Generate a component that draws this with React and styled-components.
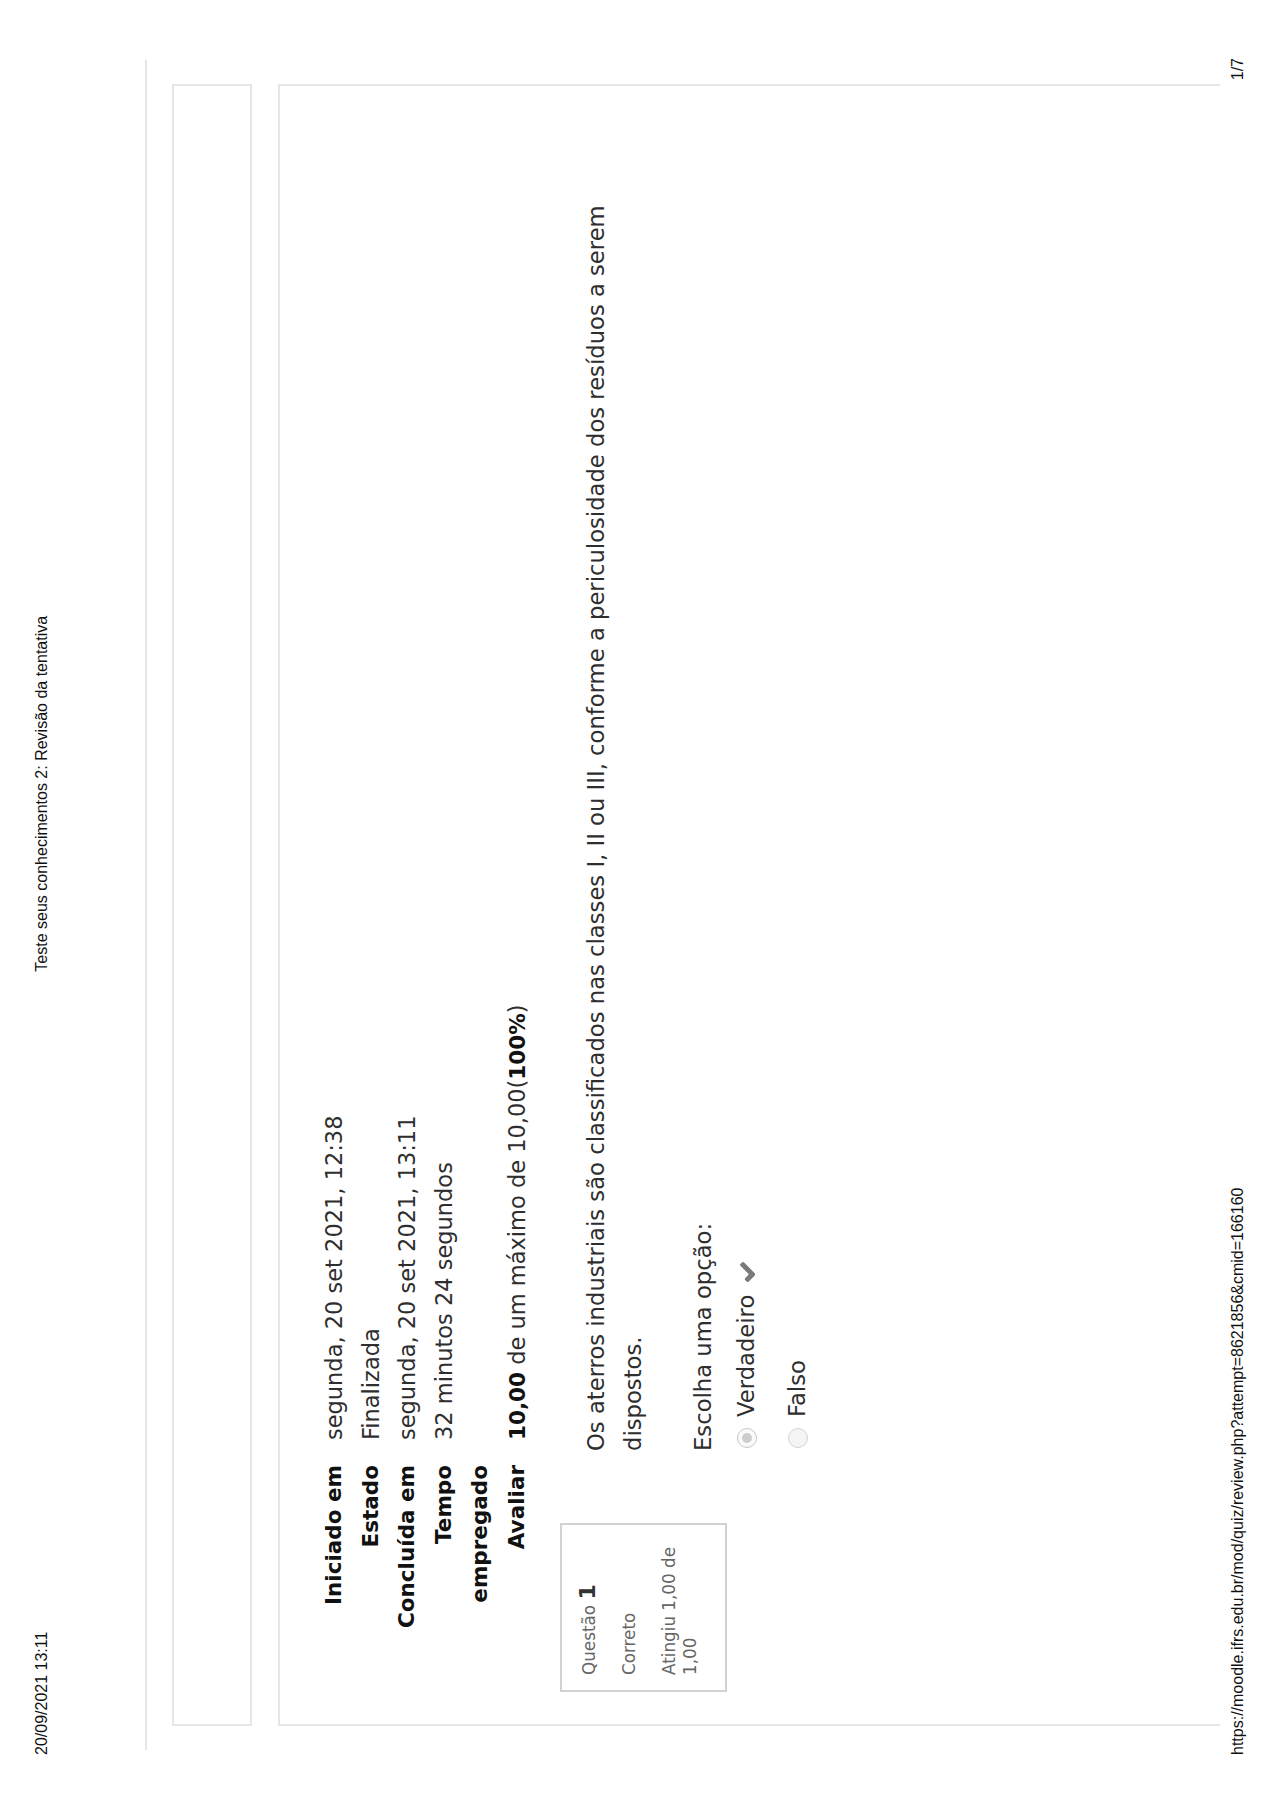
import React from 'react';
import styled, { createGlobalStyle } from 'styled-components';

const Global = createGlobalStyle`
  html, body { margin: 0; padding: 0; background: #fff; }
  #root { width: 1280px; height: 1811px; overflow: hidden; }
`;

const Viewport = styled.div`
  width: 1280px;
  height: 1811px;
  overflow: hidden;
  background: #fff;
`;

/* The printed page is landscape, photographed rotated 90° counter-clockwise */
const Sheet = styled.div`
  width: 1811px;
  height: 1280px;
  transform-origin: 0 0;
  transform: translateY(1811px) rotate(-90deg);
  display: flex;
  flex-direction: column;
  background: #fff;
`;

const PrintBar = styled.div`
  display: flex;
  align-items: flex-start;
  justify-content: ${p => (p.$spread ? 'space-between' : 'flex-start')};
  height: ${p => p.$h}px;
  box-sizing: border-box;
  padding: ${p => p.$top}px 58px 0 56px;
  font-family: "Liberation Sans", Arial, Helvetica, sans-serif;
  font-size: 16px;
  line-height: 18px;
  color: #111;
  flex-shrink: 0;
`;

const PrintTitle = styled.span`
  margin-left: 660px;
`;

const PageBody = styled.div`
  flex: 1;
  min-height: 0;
  overflow: hidden;
  margin: 0 60px 0 61px;
  border-top: 2px solid #e6e6e6;
  padding: 25px 24px 0;
  display: flex;
  flex-direction: column;
  font-family: "DejaVu Sans", Verdana, sans-serif;
`;

const EmptyBlock = styled.div`
  height: 80px;
  box-sizing: border-box;
  border: 2px solid #e6e6e6;
  flex-shrink: 0;
`;

const MainRegion = styled.div`
  flex: 1;
  margin-top: 26px;
  border: 2px solid #e6e6e6;
  border-bottom: none;
  padding-top: 36px;
  color: #2e2e2e;
`;

const Summary = styled.div`
  display: grid;
  grid-template-columns: 165px auto;
  column-gap: 25px;
  margin-left: 94px;
  font-size: 22.5px;
  line-height: 36.5px;
  align-items: start;
`;

const SumLabel = styled.div`
  font-weight: 700;
  font-size: 21.5px;
  text-align: right;
  color: #111;
`;

const SumValue = styled.div`
  color: #2e2e2e;
`;

const Strong = styled.b`
  font-weight: 700;
  font-size: 21.5px;
  color: #111;
`;

const QuestionRow = styled.div`
  display: flex;
  align-items: flex-start;
  margin-top: 24px;
  margin-left: 32px;
`;

const InfoBox = styled.div`
  width: 169px;
  box-sizing: border-box;
  border: 2px solid #d2d2d2;
  padding: 15px 14px 24px 15px;
  font-size: 16.8px;
  line-height: 21px;
  color: #666;
`;

const InfoLine = styled.div`
  margin-bottom: ${p => (p.$last ? 0 : 19)}px;
`;

const QNo = styled.span`
  font-weight: 700;
  font-size: 22px;
  color: #333;
`;

const Formulation = styled.div`
  flex: 1;
  margin-left: 72px;
  padding-top: 18px;
  padding-right: 60px;
  font-size: 22.7px;
  line-height: 37px;
`;

const Prompt = styled.div`
  margin-top: 33px;
`;

const Options = styled.div`
  display: flex;
  flex-direction: column;
`;

const OptionRow = styled.div`
  display: flex;
  align-items: center;
  padding: 6px 0 8px 3px;
`;

const Radio = styled.span`
  width: 20px;
  height: 20px;
  box-sizing: border-box;
  border-radius: 50%;
  border: 1.5px solid ${p => (p.$checked ? '#c6c6c6' : '#d3d3d3')};
  background: ${p => (p.$checked ? '#fafafa' : '#f5f5f5')};
  display: inline-flex;
  align-items: center;
  justify-content: center;
  margin-right: 11px;
  flex-shrink: 0;
  &::after {
    content: '';
    display: ${p => (p.$checked ? 'block' : 'none')};
    width: 10px;
    height: 10px;
    border-radius: 50%;
    background: #cdcdcd;
  }
`;

const CheckIcon = styled.svg`
  width: 20px;
  height: 16px;
  margin-left: 13px;
  fill: #7a7a7a;
`;

const Check = () => (
  <CheckIcon viewBox="121 330 1550 1084" aria-hidden="true">
    <path d="M1671 566q0 40-28 68l-724 724-136 136q-28 28-68 28t-68-28l-136-136-362-362q-28-28-28-68t28-68l136-136q28-28 68-28t68 28l294 295 656-657q28-28 68-28t68 28l136 136q28 28 28 68z" />
  </CheckIcon>
);

export default function App() {
  return (
    <Viewport>
      <Global />
      <Sheet>
        <PrintBar $h={145} $top={33}>
          <span>20/09/2021 13:11</span>
          <PrintTitle>Teste seus conhecimentos 2: Revisão da tentativa</PrintTitle>
        </PrintBar>

        <PageBody>
          <EmptyBlock />
          <MainRegion>
            <Summary>
              <SumLabel>Iniciado em</SumLabel>
              <SumValue>segunda, 20 set 2021, 12:38</SumValue>
              <SumLabel>Estado</SumLabel>
              <SumValue>Finalizada</SumValue>
              <SumLabel>Concluída em</SumLabel>
              <SumValue>segunda, 20 set 2021, 13:11</SumValue>
              <SumLabel>Tempo empregado</SumLabel>
              <SumValue>32 minutos 24 segundos</SumValue>
              <SumLabel>Avaliar</SumLabel>
              <SumValue>
                <Strong>10,00</Strong> de um máximo de 10,00(<Strong>100%</Strong>)
              </SumValue>
            </Summary>

            <QuestionRow>
              <InfoBox>
                <InfoLine>
                  Questão <QNo>1</QNo>
                </InfoLine>
                <InfoLine>Correto</InfoLine>
                <InfoLine $last>Atingiu 1,00 de 1,00</InfoLine>
              </InfoBox>
              <Formulation>
                <div>
                  Os aterros industriais são classificados nas classes I, II ou III, conforme a periculosidade dos
                  resíduos a serem dispostos.
                </div>
                <Prompt>Escolha uma opção:</Prompt>
                <Options>
                  <OptionRow>
                    <Radio $checked />
                    <span>Verdadeiro</span>
                    <Check />
                  </OptionRow>
                  <OptionRow>
                    <Radio />
                    <span>Falso</span>
                  </OptionRow>
                </Options>
              </Formulation>
            </QuestionRow>
          </MainRegion>
        </PageBody>

        <PrintBar $h={60} $top={9} $spread>
          <span>https://moodle.ifrs.edu.br/mod/quiz/review.php?attempt=8621856&amp;cmid=166160</span>
          <span>1/7</span>
        </PrintBar>
      </Sheet>
    </Viewport>
  );
}
